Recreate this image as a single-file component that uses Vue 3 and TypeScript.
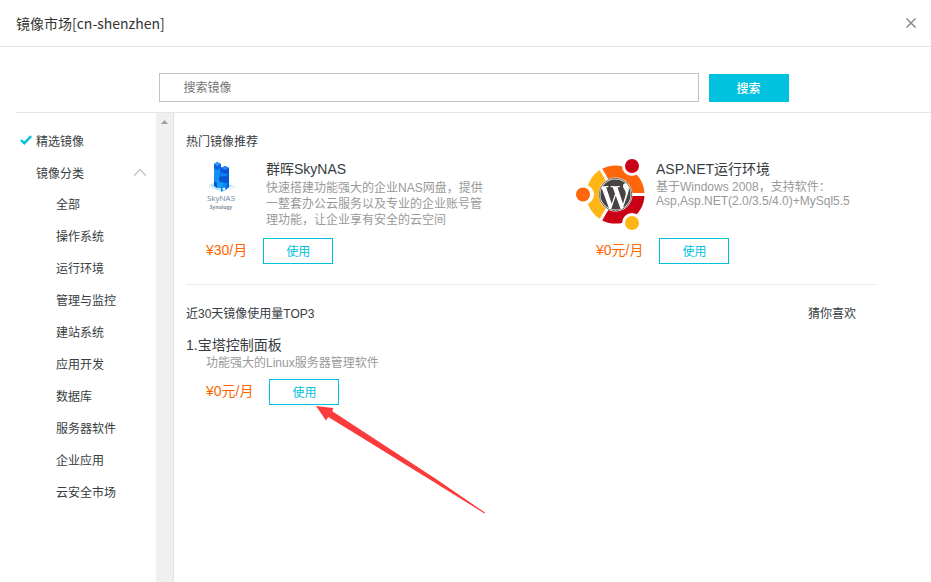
<script setup lang="ts">
import { ref } from 'vue'

interface ImageCard {
  id: string
  name: string
  desc: string[]
  price: string
  logo: 'skynas' | 'aspnet'
}

const region = 'cn-shenzhen'
const keyword = ref('')
const expanded = ref(true)

const categories: string[] = [
  '全部',
  '操作系统',
  '运行环境',
  '管理与监控',
  '建站系统',
  '应用开发',
  '数据库',
  '服务器软件',
  '企业应用',
  '云安全市场',
]

const cards: ImageCard[] = [
  {
    id: 'skynas',
    name: '群晖SkyNAS',
    desc: ['快速搭建功能强大的企业NAS网盘，提供一整套办公云服务以及专业的企业账号管理功能，让企业享有安全的云空间'],
    price: '¥30/月',
    logo: 'skynas',
  },
  {
    id: 'aspnet',
    name: 'ASP.NET运行环境',
    desc: ['基于Windows 2008，支持软件：', 'Asp,Asp.NET(2.0/3.5/4.0)+MySql5.5'],
    price: '¥0元/月',
    logo: 'aspnet',
  },
]
</script>

<template>
  <div class="dialog">
    <header class="dialog-head">
      <h1 class="dialog-title">镜像市场[{{ region }}]</h1>
      <button class="close" type="button" aria-label="关闭">
        <svg width="12" height="12" viewBox="0 0 12 12">
          <path d="M1.5 1.5L10.5 10.5M10.5 1.5L1.5 10.5" stroke="#8a8a8a" stroke-width="1.5" fill="none" />
        </svg>
      </button>
    </header>

    <div class="dialog-body">
      <form class="search" @submit.prevent>
        <input v-model="keyword" class="search-input" type="text" placeholder="搜索镜像" aria-label="搜索镜像" />
        <button class="search-button" type="submit">搜索</button>
      </form>

      <div class="columns">
        <nav class="side">
          <a class="side-link" href="#featured">
            <svg class="check" width="12" height="10" viewBox="0 0 12 10">
              <path d="M1 5L4.3 8.2L11.2 1.2" stroke="#00c1de" stroke-width="2.4" fill="none" />
            </svg>
            精选镜像
          </a>
          <button class="side-link side-toggle" type="button" :aria-expanded="expanded" @click="expanded = !expanded">
            镜像分类
            <svg width="14" height="9" viewBox="0 0 14 9">
              <path d="M1 7.8L7 1.6L13 7.8" stroke="#c4c4c4" stroke-width="1.4" fill="none" />
            </svg>
          </button>
          <ul v-if="expanded" class="side-list">
            <li v-for="item in categories" :key="item">
              <a class="side-sub" href="#category">{{ item }}</a>
            </li>
          </ul>
        </nav>

        <div class="track">
          <svg width="7" height="4" viewBox="0 0 7 4"><path d="M0 4L3.5 0L7 4Z" fill="#a0a0a0" /></svg>
        </div>

        <main class="content">
          <section class="popular">
            <h2 class="section-title">热门镜像推荐</h2>
            <div class="cards">
              <article v-for="card in cards" :key="card.id" class="card">
                <div class="card-body">
                  <svg v-if="card.logo === 'skynas'" class="logo" width="70" height="70" viewBox="0 0 70 70">
                    <ellipse cx="36" cy="28" rx="14" ry="3" fill="#eaf6fd" />
                    <path d="M23 26L31 22L37 25L47 26L38 32L31 31Z" fill="#b9e4fa" />
                    <path d="M28 6L34 8V29L28 26Z" fill="#168df2" />
                    <path d="M34 9L36 8V28L34 29Z" fill="#0467e8" />
                    <path d="M35 11L41 13V30L35 33Z" fill="#0788f2" />
                    <path d="M41 11L43 12V28L38 32L41 27Z" fill="#0759dc" />
                    <path d="M28 5L31 3L35 5V9L31 11L28 9Z" fill="#0d63db" />
                    <path d="M28 5L31 3L35 5L31 7Z" fill="#2d9cf2" />
                    <path d="M35 9L39 7L43 9V13L39 15L35 13Z" fill="#0750cf" />
                    <path d="M35 9L39 7L43 9L39 11Z" fill="#2584ed" />
                    <path d="M33 18L38 17L43 18V22L38 24L33 21Z" fill="#0755d1" />
                    <path d="M33 24L38 24L36 28L31 29L28 26V22Z" fill="#12a0f2" />
                    <path d="M28 22L31 24V29L28 27Z" fill="#0755d1" />
                    <circle cx="38" cy="30" r="1.6" fill="#d9f5ff" />
                    <text x="35" y="42" text-anchor="middle" font-size="8" fill="#6788a3">SkyNAS</text>
                    <text x="35" y="50" text-anchor="middle" font-size="5" font-weight="bold" fill="#8592a3">Synology</text>
                  </svg>
                  <svg v-else class="logo" width="70" height="72" viewBox="0 0 70 72">
                    <g fill="none" stroke-width="14">
                      <path d="M61.5 35.5A22 22 0 0 0 28.5 16.4" stroke="#ff660a" />
                      <path d="M28.5 16.4A22 22 0 0 0 28.5 54.6" stroke="#ffb515" />
                      <path d="M28.5 54.6A22 22 0 0 0 61.5 35.5" stroke="#cb0017" />
                    </g>
                    <path d="M39.5 35.5H70M39.5 35.5L23 7M39.5 35.5L23 64" stroke="#fff" stroke-width="3" />
                    <g fill="#fff">
                      <circle cx="8" cy="35.5" r="10" />
                      <circle cx="56" cy="7" r="10" />
                      <circle cx="56" cy="64" r="10" />
                      <circle cx="39.5" cy="35.5" r="17" />
                    </g>
                    <circle cx="7" cy="35.5" r="7" fill="#ff660a" />
                    <circle cx="56" cy="7" r="7" fill="#cb0017" />
                    <circle cx="56" cy="64" r="7" fill="#ffb515" />
                    <path
                      transform="translate(22.7 18.7) scale(1.4)"
                      fill="#464342"
                      d="M21.469 6.825c.84 1.537 1.318 3.3 1.318 5.175 0 3.979-2.156 7.456-5.363 9.325l3.295-9.527c.615-1.54.82-2.771.82-3.864 0-.405-.026-.78-.07-1.11m-7.981.105c.647-.03 1.232-.105 1.232-.105.582-.075.514-.93-.067-.899 0 0-1.755.135-2.88.135-1.064 0-2.85-.15-2.85-.15-.585-.03-.661.855-.075.885 0 0 .54.061 1.125.09l1.68 4.605-2.37 7.08L5.354 6.9c.649-.03 1.234-.1 1.234-.1.585-.075.516-.93-.065-.896 0 0-1.746.138-2.874.138-.2 0-.438-.008-.69-.015C4.911 3.15 8.235 1.215 12 1.215c2.809 0 5.365 1.072 7.286 2.833-.046-.003-.091-.009-.141-.009-1.06 0-1.812.923-1.812 1.914 0 .89.513 1.643 1.06 2.531.411.72.89 1.643.89 2.977 0 .915-.354 1.994-.821 3.479l-1.075 3.585-3.9-11.61zM12 22.784c-1.059 0-2.081-.153-3.048-.437l3.237-9.406 3.315 9.087c.024.053.05.101.078.149-1.12.393-2.325.607-3.582.607M1.211 12c0-1.564.336-3.05.935-4.39L7.29 21.709C3.694 19.96 1.212 16.271 1.211 12"
                    />
                    <circle cx="39.5" cy="35.5" r="16.3" fill="none" stroke="#6b6866" stroke-width="1" />
                  </svg>
                  <div class="card-text">
                    <h3 class="item-title">{{ card.name }}</h3>
                    <p class="desc card-desc" :class="{ compact: card.desc.length > 1 }">
                      <span v-for="line in card.desc" :key="line" class="desc-line">{{ line }}</span>
                    </p>
                  </div>
                </div>
                <div class="buy">
                  <span class="price">{{ card.price }}</span>
                  <button class="use" type="button">使用</button>
                </div>
              </article>
            </div>
          </section>

          <section class="ranking">
            <div class="ranking-head">
              <h2 class="section-title">近30天镜像使用量TOP3</h2>
              <h2 class="section-title">猜你喜欢</h2>
            </div>
            <h3 class="item-title">1.宝塔控制面板</h3>
            <p class="desc ranking-desc">功能强大的Linux服务器管理软件</p>
            <div class="buy ranking-buy">
              <span class="price">¥0元/月</span>
              <span class="pointed">
                <button class="use" type="button">使用</button>
                <svg class="pointer" width="170" height="108" viewBox="0 0 170 108">
                  <path d="M0 0L17.3 2L16.3 5.2L120 73L169 106.6L168.4 107.4L117 75.5L12.3 11L10 14.6Z" fill="#fb3b3b" />
                </svg>
              </span>
            </div>
          </section>
        </main>
      </div>
    </div>
  </div>
</template>

<style>
body {
  background: #fff;
}
</style>

<style scoped>
.dialog {
  display: flex;
  flex-direction: column;
  min-height: 100vh;
  color: #373d41;
  font-family: "Liberation Sans", "Noto Sans CJK SC", sans-serif;
  font-size: 12px;
}
.dialog *,
.dialog {
  box-sizing: border-box;
}
h1,
h2,
h3,
p,
ul {
  margin: 0;
  padding: 0;
  font-weight: 400;
}
button {
  font-family: inherit;
  font-size: 12px;
  padding: 0;
  border: 0;
  background: none;
  cursor: pointer;
}
a {
  color: inherit;
  text-decoration: none;
}
svg {
  display: block;
  flex: none;
}
.dialog-head {
  display: flex;
  align-items: center;
  justify-content: space-between;
  height: 47px;
  padding: 0 14px 0 16px;
  border-bottom: 1px solid #e5e5e5;
}
.dialog-title {
  font-family: "Noto Sans CJK SC", sans-serif;
  font-size: 14px;
  line-height: 20px;
  color: #333;
}
.dialog-body {
  display: flex;
  flex: 1;
  flex-direction: column;
  margin-left: 16px;
}
.search {
  display: flex;
  align-items: flex-end;
  justify-content: center;
  gap: 10px;
  padding: 26px 0 10px;
  border-bottom: 1px solid #e5e5e5;
}
.search-input {
  flex: 0 1 540px;
  min-width: 0;
  height: 29px;
  padding: 0 24px;
  border: 1px solid #c3c3c3;
  border-radius: 0;
  font-family: inherit;
  font-size: 12px;
  color: #373d41;
  outline: none;
}
.search-input::placeholder {
  color: #757575;
}
.search-button {
  width: 80px;
  height: 28px;
  padding-bottom: 2px;
  background: #00c1de;
  color: #fff;
  font-weight: 500;
}
.columns {
  display: flex;
  flex: 1;
}
.side {
  flex: 0 0 140px;
  padding-top: 12px;
}
.side-link {
  display: flex;
  align-items: center;
  gap: 4px;
  width: 100%;
  height: 32px;
  padding: 0 9px 2px 4px;
}
.side-toggle {
  justify-content: space-between;
  padding-left: 20px;
  color: inherit;
}
.side-list {
  list-style: none;
}
.side-sub {
  display: block;
  padding-left: 40px;
  line-height: 32px;
}
.track {
  display: flex;
  flex: 0 0 18px;
  justify-content: center;
  padding-top: 7px;
  background: #f0f0f0;
  border-right: 1px solid #e3e3e3;
}
.content {
  flex: 1;
  max-width: 702px;
  padding: 19px 0 0 12px;
}
.section-title {
  font-size: 12px;
  line-height: 20px;
}
.cards {
  display: flex;
  justify-content: space-between;
  margin-top: 7px;
  padding-bottom: 20px;
  border-bottom: 1px solid #ebebeb;
}
.card {
  width: 300px;
}
.card-body {
  display: flex;
  gap: 10px;
  height: 70px;
}
.logo {
  font-family: "Open Sans", sans-serif;
}
.card-text {
  flex: 1;
}
.item-title {
  font-size: 14px;
  line-height: 20px;
}
.desc {
  color: #999;
  line-height: 16px;
}
.card-desc {
  padding-top: 1px;
}
.desc.compact {
  line-height: 14px;
}
.desc-line {
  display: block;
}
.buy {
  display: flex;
  align-items: center;
  gap: 16px;
  margin-top: 9px;
  padding-left: 20px;
}
.price {
  padding-bottom: 2px;
  font-size: 14px;
  line-height: 20px;
  color: #ff6600;
}
.use {
  display: block;
  width: 70px;
  height: 26px;
  padding-bottom: 2px;
  border: 1px solid #00c1de;
  color: #00c1de;
}
.ranking {
  padding-top: 19px;
}
.ranking-head {
  display: flex;
  justify-content: space-between;
  margin-bottom: 11px;
  padding-right: 20px;
}
.ranking-desc {
  padding-left: 20px;
}
.ranking-buy {
  margin-top: 8px;
}
.pointed {
  position: relative;
}
.pointer {
  position: absolute;
  top: 27px;
  left: 47px;
  pointer-events: none;
}
</style>
